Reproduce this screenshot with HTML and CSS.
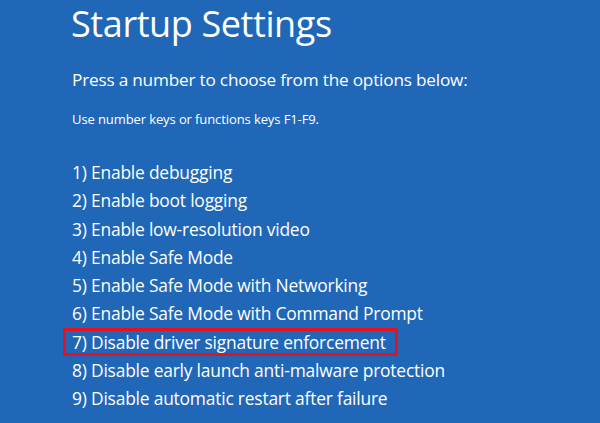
FILE: index.html
```html
<!DOCTYPE html>
<html lang="en">
<head>
<meta charset="utf-8">
<title>Startup Settings</title>
<link rel="stylesheet" href="styles.css">
</head>
<body>
<main class="screen">
  <h1 class="title">Startup Settings</h1>
  <p class="prompt">Press a number to choose from the options below:</p>
  <p class="hint">Use number keys or functions keys F1-F9.</p>
  <ol class="options">
    <li class="option">1) Enable debugging</li>
    <li class="option">2) Enable boot logging</li>
    <li class="option">3) Enable low-resolution video</li>
    <li class="option">4) Enable Safe Mode</li>
    <li class="option">5) Enable Safe Mode with Networking</li>
    <li class="option">6) Enable Safe Mode with Command Prompt</li>
    <li class="option option-marked">7) Disable driver signature enforcement</li>
    <li class="option">8) Disable early launch anti-malware protection</li>
    <li class="option">9) Disable automatic restart after failure</li>
  </ol>
</main>
</body>
</html>
```
FILE: styles.css
```css
html, body {
  margin: 0;
  padding: 0;
  height: 100%;
  background: #2067b8;
}
.screen {
  box-sizing: border-box;
  height: 423px;
  overflow: hidden;
  padding: 0 0 0 71px;
  color: #ffffff;
  font-family: "Open Sans", "Noto Sans", sans-serif;
}
.title {
  margin: 0;
  font-size: 36px;
  font-weight: 400;
  line-height: 48px;
  letter-spacing: -0.4px;
}
.prompt {
  margin: 20px 0 0 1px;
  font-size: 17.2px;
  line-height: 24px;
  letter-spacing: -0.2px;
}
.hint {
  margin: 18px 0 0 1px;
  font-size: 13px;
  line-height: 18px;
  letter-spacing: -0.1px;
}
.options {
  list-style: none;
  margin: 30px 0 0 1px;
  padding: 0;
}
.option {
  font-size: 17.4px;
  line-height: 28.25px;
  height: 28.25px;
  letter-spacing: -0.2px;
  white-space: nowrap;
}
.option-marked {
  box-sizing: border-box;
  margin-left: -9px;
  padding-left: 6px;
  width: 335px;
  border: 3px solid #e8101c;
  line-height: 22.25px;
}
```
